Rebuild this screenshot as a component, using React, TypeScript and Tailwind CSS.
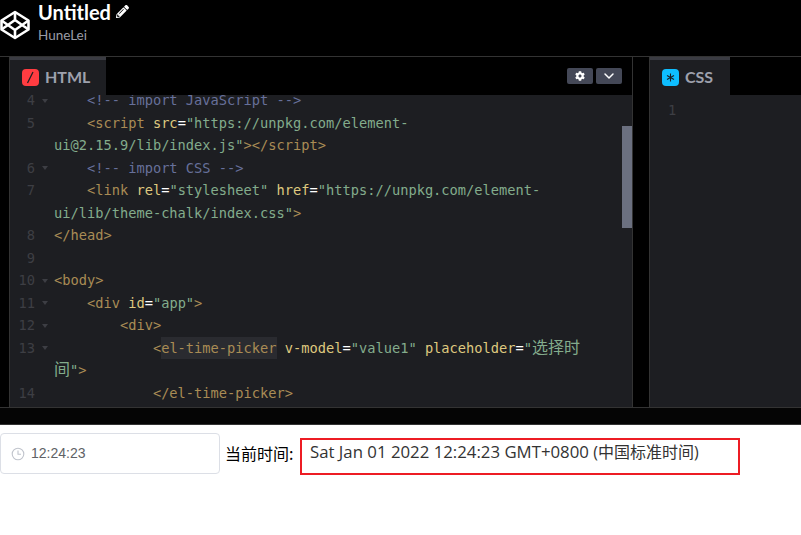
import { ChevronDown } from 'lucide-react';
import { FaCog, FaPencilAlt } from 'react-icons/fa';

const tag = 'text-[#a98c55]';
const attr = 'text-[#dfc97f]';
const str = 'text-[#83ac8c]';
const eq = 'text-white';
const comment = 'text-[#67709a]';
const cjk = 'text-[#83ac8c] text-[16px]';

type Seg = [string, string];
type Line = { num?: number; fold?: boolean; segs: Seg[] };

const lines: Line[] = [
  { num: 4, fold: true, segs: [[comment, '    <!-- import JavaScript -->']] },
  { num: 5, segs: [[tag, '    <script '], [attr, 'src'], [eq, '='], [str, '"https://unpkg.com/element-']] },
  { segs: [[str, 'ui@2.15.9/lib/index.js"'], [tag, '></script>']] },
  { num: 6, fold: true, segs: [[comment, '    <!-- import CSS -->']] },
  { num: 7, segs: [[tag, '    <link '], [attr, 'rel'], [eq, '='], [str, '"stylesheet" '], [attr, 'href'], [eq, '='], [str, '"https://unpkg.com/element-']] },
  { segs: [[str, 'ui/lib/theme-chalk/index.css"'], [tag, '>']] },
  { num: 8, segs: [[tag, '</head>']] },
  { num: 9, segs: [] },
  { num: 10, fold: true, segs: [[tag, '<body>']] },
  { num: 11, fold: true, segs: [[tag, '    <div '], [attr, 'id'], [eq, '='], [str, '"app"'], [tag, '>']] },
  { num: 12, fold: true, segs: [[tag, '        <div>']] },
  { num: 13, fold: true, segs: [[tag, '            <'], ['inline-block h-[22.5px] bg-[#2a2b30] text-[#a98c55]', 'el-time-picker'], [tag, ' '], [attr, 'v-model'], [eq, '='], [str, '"value1" '], [attr, 'placeholder'], [eq, '='], [str, '"'], [cjk, '选择时']] },
  { segs: [[cjk, '间'], [str, '"'], [tag, '>']] },
  { num: 14, segs: [[tag, '            </el-time-picker>']] },
];

const mono = 'font-["DejaVu_Sans_Mono","Noto_Sans_CJK_SC",monospace] text-[13.7px] leading-[22.5px]';

const CodeLine = ({ num, fold, segs }: Line) => (
  <div className={`flex h-[22.5px] items-center whitespace-pre ${mono}`}>
    <div className="w-[25px] shrink-0 text-right text-[#3d3e44]">{num}</div>
    <div className="flex w-[19px] shrink-0 justify-center">
      {fold && <div className="mt-[1px] h-0 w-0 border-x-[3px] border-t-[4px] border-x-transparent border-t-[#3d3e44]" />}
    </div>
    <div>
      {segs.map(([cls, text], i) => (
        <span key={i} className={cls}>{text}</span>
      ))}
    </div>
  </div>
);

const Tab = ({ name, width, icon }: { name: string; width: string; icon: React.ReactNode }) => (
  <div className={`flex h-[38px] items-center gap-[6px] border-t-[3px] border-[#3a3b42] bg-[#1d1e22] pl-[12px] ${width}`}>
    {icon}
    <span className='pb-[1px] font-["Lato",sans-serif] text-[16px] font-bold text-[#9ea1ad]'>{name}</span>
  </div>
);

export default function App() {
  return (
    <div className="h-[535px] w-[801px] overflow-hidden bg-white">
      {/* pen header */}
      <div className="flex h-[57px] border-b border-[#333] bg-black">
        <svg viewBox="0 0 30 30" className="mt-[10px] h-[30px] w-[30px] shrink-0" fill="none" stroke="white" strokeWidth="2.6" strokeLinejoin="round">
          <path d="M15 2 28.5 10.5V19.5L15 28 1.5 19.5V10.5Z" />
          <path d="M15 2V10M15 20V28M1.5 10.5 15 20 28.5 10.5M1.5 19.5 15 10 28.5 19.5" />
        </svg>
        <div className="ml-[8px] flex flex-col">
          <div className="flex items-center gap-[5px]">
            <span className='font-["Lato",sans-serif] text-[20px] font-bold leading-[24px] text-white'>Untitled</span>
            <FaPencilAlt className="mb-[2px] h-[13px] w-[13px] text-white" />
          </div>
          <span className='mt-[3px] font-["Lato",sans-serif] text-[13.5px] leading-[16px] text-[#9a9ca6]'>HuneLei</span>
        </div>
      </div>

      {/* editors */}
      <div className="flex h-[350px] bg-black pl-[9px]">
        <div className="flex w-[624px] shrink-0 flex-col border-x border-[#333]">
          <div className="flex items-center justify-between bg-black pr-[10px]">
            <Tab
              name="HTML"
              width="w-[96px]"
              icon={
                <div className="flex h-[17px] w-[17px] items-center justify-center rounded-[4px] bg-[#ff3c41]">
                  <svg viewBox="0 0 17 17" className="h-[17px] w-[17px]"><path d="M5.5 14 11 3" stroke="#1d1e22" strokeWidth="1.2" /></svg>
                </div>
              }
            />
            <div className="flex gap-[3px]">
              <div className="flex h-[16px] w-[26px] items-center justify-center rounded-[2px] bg-[#444857]">
                <FaCog className="h-[10px] w-[10px] text-white" />
              </div>
              <div className="flex h-[16px] w-[26px] items-center justify-center rounded-[2px] bg-[#444857]">
                <ChevronDown className="h-[16px] w-[16px] text-white" strokeWidth={2.2} />
              </div>
            </div>
          </div>
          <div className="relative flex-1 overflow-hidden bg-[#1d1e22]">
            <div className="-mt-[6px]">
              {lines.map((l, i) => (
                <CodeLine key={i} {...l} />
              ))}
            </div>
            <div className="absolute right-0 top-[31px] h-[102px] w-[10px] bg-[#6b7080]" />
          </div>
        </div>
        <div className="w-[16px] shrink-0" />
        <div className="flex flex-1 flex-col border-l border-[#333]">
          <div className="bg-black">
            <Tab
              name="CSS"
              width="w-[80px]"
              icon={
                <div className="flex h-[17px] w-[17px] items-center justify-center rounded-[4px] bg-[#0ebeff]">
                  <svg viewBox="0 0 17 17" className="h-[17px] w-[17px]"><path d="M8.5 4.5V12.5M5 6.5 12 10.5M12 6.5 5 10.5" stroke="#1d1e22" strokeWidth="1.1" /></svg>
                </div>
              }
            />
          </div>
          <div className="flex-1 bg-[#1d1e22] pt-[4px]">
            <div className={`flex h-[22px] items-center pl-[18px] text-[#3d3e44] ${mono}`}>1</div>
          </div>
        </div>
      </div>

      <div className="h-[18px] border-y border-[#333] bg-[#050505]" />

      {/* result */}
      <div className="flex items-start pt-[8px]">
        <div className='flex h-[41px] w-[220px] items-center rounded-[4px] border border-[#dcdfe6] pl-[10px] font-["Liberation_Sans",sans-serif] text-[14px] text-[#606266]'>
          <svg viewBox="0 0 14 14" className="h-[14px] w-[14px]" fill="none" stroke="#c0c4cc" strokeWidth="1.1">
            <circle cx="7" cy="7" r="5.8" />
            <path d="M7 3.5V7.2H10" />
          </svg>
          <span className="ml-[6px]">12:24:23</span>
        </div>
        <span className='ml-[5px] mt-[9px] w-[75px] font-["Noto_Sans_CJK_SC",sans-serif] text-[16px] leading-[22px] text-black'>当前时间:</span>
        <div className='mt-[5px] h-[37px] w-[440px] whitespace-nowrap border-2 border-[#ed1c24] pl-[8px] font-["Open_Sans","Noto_Sans_CJK_SC",sans-serif] text-[16.8px] leading-[24px] text-[#333]'>
          Sat Jan 01 2022 12:24:23 GMT+0800 <span className="text-[16px]">(中国标准时间)</span>
        </div>
      </div>
    </div>
  );
}
